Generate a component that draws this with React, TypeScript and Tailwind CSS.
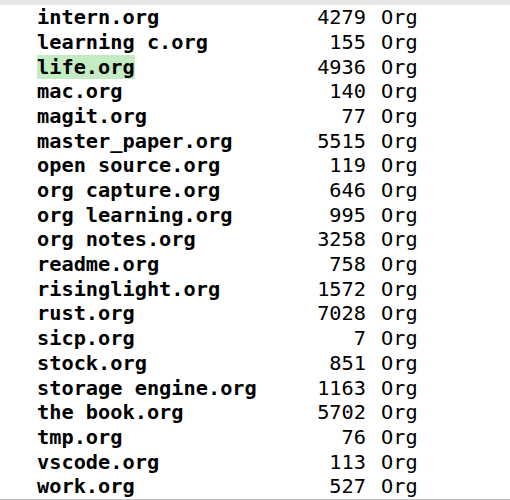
const rows: [string, number][] = [
  ["intern.org", 4279],
  ["learning c.org", 155],
  ["life.org", 4936],
  ["mac.org", 140],
  ["magit.org", 77],
  ["master_paper.org", 5515],
  ["open source.org", 119],
  ["org capture.org", 646],
  ["org learning.org", 995],
  ["org notes.org", 3258],
  ["readme.org", 758],
  ["risinglight.org", 1572],
  ["rust.org", 7028],
  ["sicp.org", 7],
  ["stock.org", 851],
  ["storage engine.org", 1163],
  ["the book.org", 5702],
  ["tmp.org", 76],
  ["vscode.org", 113],
  ["work.org", 527],
];

export default function App() {
  return (
    <div
      className="w-[510px] h-[500px] overflow-hidden bg-white text-black text-[20.3px] leading-[24.7px]"
      style={{ fontFamily: '"DejaVu Sans Mono", "Liberation Mono", monospace' }}
    >
      {/* header line scrolled mostly out of view */}
      <div className="-mt-[19.5px] flex bg-[#e6e6e6] text-[#222]">
        <span className="w-[37px] pl-[2px]">MR</span>
        <span className="w-[260px]">Buffer</span>
        <span className="w-[69px] text-right">Size</span>
        <span className="pl-[15px]">Mode</span>
      </div>
      <div className="flex flex-col">
        {rows.map(([name, size]) => (
          <div key={name} className="flex h-[24.7px]">
            <span className="w-[37px]" />
            <span className="w-[260px] font-bold">
              <span className={name === "life.org" ? "bg-[#c3ecc2] inline-block" : ""}>{name}</span>
            </span>
            <span className="w-[69px] text-right">{size}</span>
            <span className="pl-[15px]">Org</span>
          </div>
        ))}
      </div>
      <div className="h-[1px] bg-[#bdbdbd]" />
    </div>
  );
}
